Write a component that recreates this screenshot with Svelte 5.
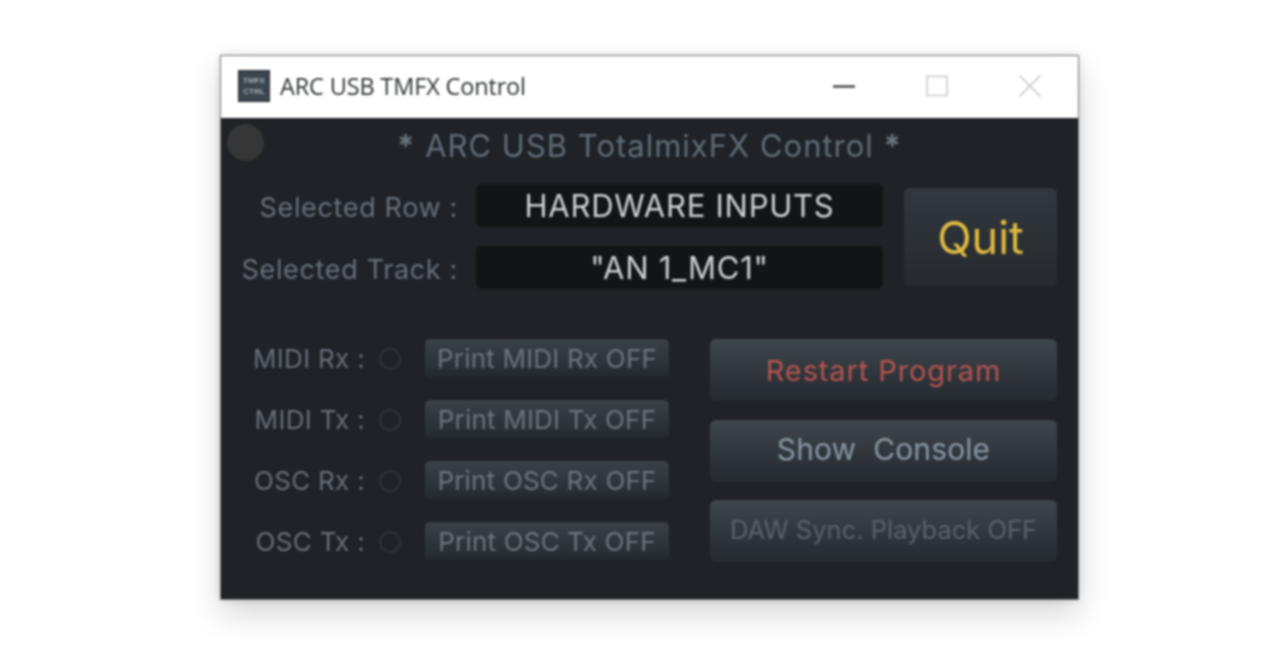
<script>
  const monitors = [
    { label: 'MIDI Rx :', action: 'Print MIDI Rx OFF' },
    { label: 'MIDI Tx :', action: 'Print MIDI Tx OFF' },
    { label: 'OSC Rx :', action: 'Print OSC Rx OFF' },
    { label: 'OSC Tx :', action: 'Print OSC Tx OFF' }
  ];
</script>

<div class="page">
  <div class="window">
    <header class="titlebar">
      <div class="app-icon"><span>TMFX</span><span>CTRL</span></div>
      <span class="app-name">ARC USB TMFX Control</span>
      <div class="win-controls">
        <svg width="24" height="24" viewBox="0 0 24 24"><path d="M1 12.5h22" stroke="#3f4245" stroke-width="2.4" fill="none" /></svg>
        <svg width="24" height="24" viewBox="0 0 24 24"><rect x="2" y="2.5" width="20" height="19" stroke="#d6d6d6" stroke-width="2" fill="none" /></svg>
        <svg width="24" height="24" viewBox="0 0 24 24"><path d="M1.5 1.5l21 21M22.5 1.5l-21 21" stroke="#d2d2d2" stroke-width="1.8" fill="none" /></svg>
      </div>
    </header>

    <main class="panel">
      <div class="status-dot"></div>
      <h1><span class="star">*</span> ARC USB TotalmixFX Control <span class="star">*</span></h1>

      <section class="selection">
        <div class="fields">
          <span class="field-label">Selected Row :</span>
          <div class="readout">HARDWARE INPUTS</div>
          <span class="field-label">Selected Track :</span>
          <div class="readout">"AN 1_MC1"</div>
        </div>
        <button class="quit">Quit</button>
      </section>

      <section class="controls">
        <div class="monitors">
          {#each monitors as m}
            <div class="monitor">
              <span class="monitor-label">{m.label}</span>
              <span class="led"></span>
              <button class="print">{m.action}</button>
            </div>
          {/each}
        </div>
        <div class="actions">
          <button class="action restart">Restart Program</button>
          <button class="action console">Show&nbsp; Console</button>
          <button class="action daw">DAW Sync. Playback OFF</button>
        </div>
      </section>
    </main>
  </div>
</div>

<style>
  :global(body) {
    margin: 0;
    background: #ffffff;
  }

  .page {
    height: 671px;
    box-sizing: border-box;
    padding: 55px 0 0 220px;
    overflow: hidden;
    font-family: "Inter", "Noto Sans", sans-serif;
  }

  .window {
    width: 859px;
    height: 545px;
    box-sizing: border-box;
    display: flex;
    flex-direction: column;
    border: 1px solid #77797b;
    box-shadow: 0 14px 30px rgba(0, 0, 0, 0.16), 0 0 8px rgba(0, 0, 0, 0.14);
    filter: blur(0.8px);
  }

  .titlebar {
    height: 62px;
    flex: none;
    display: flex;
    align-items: center;
    background: #ffffff;
    padding: 0 0 2px 17px;
    box-sizing: border-box;
  }

  .app-icon {
    width: 32px;
    height: 32px;
    background: #3c464e;
    border: 1px solid #23282c;
    box-sizing: border-box;
    display: flex;
    flex-direction: column;
    align-items: center;
    justify-content: center;
    font: 700 8px/11px "Liberation Sans", sans-serif;
    color: #a3adb5;
  }

  .app-name {
    margin-left: 10px;
    font-family: "Open Sans", sans-serif;
    font-size: 23.5px;
    letter-spacing: -0.15px;
    color: #2f3234;
  }

  .win-controls {
    margin-left: auto;
    margin-right: 36px;
    display: flex;
    gap: 69px;
  }

  .panel {
    flex: 1;
    position: relative;
    background: #1f2226;
    box-sizing: border-box;
    padding: 0 21px 0 17px;
  }

  .status-dot {
    position: absolute;
    left: 6px;
    top: 6px;
    width: 37px;
    height: 37px;
    border-radius: 50%;
    background: #363636;
  }

  h1 {
    margin: 0;
    height: 66px;
    line-height: 55px;
    text-align: center;
    font-size: 31px;
    font-weight: 400;
    letter-spacing: 1px;
    color: #616c79;
    padding-left: 4px;
    white-space: nowrap;
  }

  .star {
    color: #6a737d;
    font-weight: 700;
  }

  .selection {
    display: flex;
    align-items: center;
    justify-content: space-between;
    height: 105px;
  }

  .fields {
    display: grid;
    grid-template-columns: 220px 407px;
    grid-auto-rows: 43px;
    row-gap: 19px;
    column-gap: 18px;
    align-items: center;
  }

  .field-label {
    text-align: right;
    font-size: 27px;
    letter-spacing: 0.65px;
    padding-top: 4px;
    white-space: nowrap;
    color: #67707b;
  }

  .readout {
    height: 43px;
    line-height: 44px;
    background: #131416;
    border-radius: 6px;
    text-align: center;
    font-size: 31px;
    letter-spacing: 0.75px;
    color: #cfd1d3;
  }

  button {
    border: none;
    font-family: inherit;
    padding: 0;
    white-space: nowrap;
  }

  .quit {
    width: 153px;
    height: 98px;
    border-radius: 6px;
    background: linear-gradient(#32383e, #262a2f);
    color: #e0bb40;
    font-size: 45px;
    padding-top: 2px;
  }

  .controls {
    display: flex;
    justify-content: space-between;
    margin-top: 50px;
  }

  .monitors {
    display: flex;
    flex-direction: column;
    gap: 22px;
  }

  .monitor {
    display: grid;
    grid-template-columns: 127px 22px 244px;
    column-gap: 14px;
    align-items: center;
    height: 39px;
  }

  .monitor-label {
    text-align: right;
    font-size: 26px;
    letter-spacing: 0.3px;
    white-space: nowrap;
    color: #676e78;
  }

  .led {
    width: 22px;
    height: 22px;
    box-sizing: border-box;
    border: 2px solid #2f3337;
    border-radius: 50%;
  }

  .print {
    width: 244px;
    height: 39px;
    margin-left: 10px;
    border-radius: 5px;
    background: linear-gradient(#3b4146, #2a3237 70%, #22272b);
    color: #6d7379;
    font-size: 26px;
    letter-spacing: 0.2px;
  }

  .actions {
    width: 347px;
    display: flex;
    flex-direction: column;
    gap: 18.5px;
  }

  .action {
    width: 100%;
    height: 62px;
    border-radius: 6px;
    background: linear-gradient(#40474c, #2a3036 75%, #262b30);
    font-size: 29px;
    letter-spacing: 0.9px;
  }

  .restart {
    color: #b65350;
  }

  .console {
    color: #8897a4;
    font-size: 30px;
    letter-spacing: 0.1px;
    padding-bottom: 3px;
  }

  .daw {
    color: #5b6168;
    font-size: 25.5px;
    letter-spacing: 0;
    padding-bottom: 3px;
  }
</style>
